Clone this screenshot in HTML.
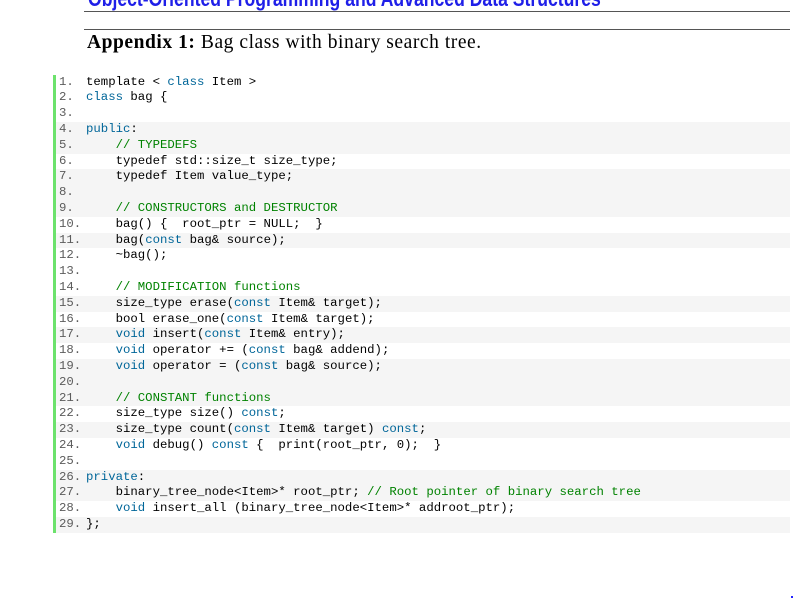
<!DOCTYPE html>
<html><head><meta charset="utf-8"><style>
body{margin:0;width:793px;height:599px;background:#fff;position:relative;overflow:hidden}
.h{position:absolute;left:88px;top:-14px;font:bold 22px "Liberation Sans",sans-serif;color:#1f1fe8;white-space:nowrap;transform:scaleX(0.8);transform-origin:0 0}
.rule{position:absolute;left:84px;width:706px;height:1px;background:#555}
.t{position:absolute;left:87px;top:32px;font:19.5px "Liberation Serif",serif;color:#000;white-space:nowrap;letter-spacing:0.55px}
.code{position:absolute;left:53px;top:74.6px;width:734px;border-left:3px solid #6ce26c;font:12.33px "Liberation Mono",monospace;}
.l{height:15.8px;line-height:15.8px;position:relative;white-space:pre;color:#000}
.s{background:#f5f5f5}
.n{position:absolute;left:3px;color:#5c5c5c}
.c{position:absolute;left:30px}
.k{color:#006699}
.g{color:#008200}
</style></head><body>
<div class="h">Object-Oriented Programming and Advanced Data Structures</div>
<div class="rule" style="top:11px"></div>
<div class="rule" style="top:29px"></div>
<div class="t"><b>Appendix 1:</b> Bag class with binary search tree.</div>
<div class="code">
<div class="l"><span class="n">1.</span><span class="c">template &lt; <span class="k">class</span> Item &gt;</span></div>
<div class="l"><span class="n">2.</span><span class="c"><span class="k">class</span> bag {</span></div>
<div class="l"><span class="n">3.</span></div>
<div class="l s"><span class="n">4.</span><span class="c"><span class="k">public</span>:</span></div>
<div class="l s"><span class="n">5.</span><span class="c">    <span class="g">// TYPEDEFS</span></span></div>
<div class="l"><span class="n">6.</span><span class="c">    typedef std::size_t size_type;</span></div>
<div class="l s"><span class="n">7.</span><span class="c">    typedef Item value_type;</span></div>
<div class="l s"><span class="n">8.</span></div>
<div class="l s"><span class="n">9.</span><span class="c">    <span class="g">// CONSTRUCTORS and DESTRUCTOR</span></span></div>
<div class="l"><span class="n">10.</span><span class="c">    bag() {  root_ptr = NULL;  }</span></div>
<div class="l s"><span class="n">11.</span><span class="c">    bag(<span class="k">const</span> bag&amp; source);</span></div>
<div class="l"><span class="n">12.</span><span class="c">    ~bag();</span></div>
<div class="l"><span class="n">13.</span></div>
<div class="l"><span class="n">14.</span><span class="c">    <span class="g">// MODIFICATION functions</span></span></div>
<div class="l s"><span class="n">15.</span><span class="c">    size_type erase(<span class="k">const</span> Item&amp; target);</span></div>
<div class="l"><span class="n">16.</span><span class="c">    bool erase_one(<span class="k">const</span> Item&amp; target);</span></div>
<div class="l s"><span class="n">17.</span><span class="c">    <span class="k">void</span> insert(<span class="k">const</span> Item&amp; entry);</span></div>
<div class="l"><span class="n">18.</span><span class="c">    <span class="k">void</span> operator += (<span class="k">const</span> bag&amp; addend);</span></div>
<div class="l s"><span class="n">19.</span><span class="c">    <span class="k">void</span> operator = (<span class="k">const</span> bag&amp; source);</span></div>
<div class="l s"><span class="n">20.</span></div>
<div class="l s"><span class="n">21.</span><span class="c">    <span class="g">// CONSTANT functions</span></span></div>
<div class="l"><span class="n">22.</span><span class="c">    size_type size() <span class="k">const</span>;</span></div>
<div class="l s"><span class="n">23.</span><span class="c">    size_type count(<span class="k">const</span> Item&amp; target) <span class="k">const</span>;</span></div>
<div class="l"><span class="n">24.</span><span class="c">    <span class="k">void</span> debug() <span class="k">const</span> {  print(root_ptr, 0);  }</span></div>
<div class="l"><span class="n">25.</span></div>
<div class="l s"><span class="n">26.</span><span class="c"><span class="k">private</span>:</span></div>
<div class="l s"><span class="n">27.</span><span class="c">    binary_tree_node&lt;Item&gt;* root_ptr; <span class="g">// Root pointer of binary search tree</span></span></div>
<div class="l"><span class="n">28.</span><span class="c">    <span class="k">void</span> insert_all (binary_tree_node&lt;Item&gt;* addroot_ptr);</span></div>
<div class="l s"><span class="n">29.</span><span class="c">};</span></div>
</div>
<div style="position:absolute;left:791px;top:596px;width:2px;height:2px;background:#22f"></div>
</body></html>
